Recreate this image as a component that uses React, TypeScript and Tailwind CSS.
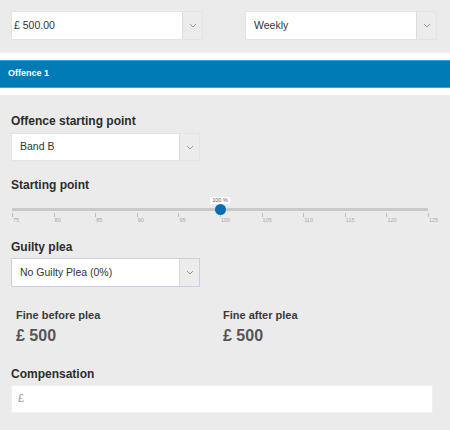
import React from "react";

const ticks = [75, 80, 85, 90, 95, 100, 105, 110, 115, 120, 125];

function Chevron() {
  return (
    <svg width="8" height="5" viewBox="0 0 8 5" fill="none" stroke="#9a9a9a" strokeWidth="1">
      <path d="M1 1l3 3 3-3" />
    </svg>
  );
}

function Select({ value, width, height = "h-[29px]", focused = false, pad = "pl-[8px]" }: { value: string; width: string; height?: string; focused?: boolean; pad?: string }) {
  return (
    <div
      className={`flex ${width} ${height} bg-white border ${focused ? "border-[#c9cde6]" : "border-[#e4e4e4]"}`}
    >
      <div className={`flex-1 flex items-center ${pad} text-[10.5px] text-[#333]`}>{value}</div>
      <div className="w-[20px] flex items-center justify-center bg-[#ececec] border-l border-[#dcdcdc]">
        <Chevron />
      </div>
    </div>
  );
}

function Slider() {
  return (
    <div className="relative ml-[12px] w-[416px] h-[26px] mt-[4px]">
      <div className="absolute left-0 right-0 top-[11px] h-[3px] bg-[#c9c9c9]" />
      {ticks.map((t, i) => (
        <div key={t} className="absolute top-[16px]" style={{ left: (i * 416) / 10 }}>
          <div className="w-px h-[4px] bg-[#bdbdbd]" />
          <div className="text-[5.5px] leading-[6px] text-[#aaa] ml-[1px]">{t}</div>
        </div>
      ))}
      <div className="absolute top-[0px] left-[208px] -translate-x-1/2 bg-white/80 px-[2px] text-[5.5px] leading-[7px] text-[#666]">
        100 %
      </div>
      <div className="absolute top-[7px] left-[203px] w-[11px] h-[11px] rounded-full bg-[#0a6db0]" />
    </div>
  );
}

export default function App() {
  return (
    <div className="w-[450px] h-[430px] overflow-hidden bg-[#ebebeb] text-[#333]" style={{ fontFamily: '"Liberation Sans", Arial, sans-serif' }}>
      <div className="flex justify-between pl-[11px] pr-[13px] pt-[11px]">
        <Select value="£ 500.00" width="w-[192px]" pad="pl-[2px]" />
        <Select value="Weekly" width="w-[192px]" />
      </div>
      <div className="mt-[13px] h-[7px] bg-white" />
      <div className="h-[28px] bg-[#007bb6] border-y border-[#36a5dc] flex items-center pl-[8px] text-white text-[9px] font-bold">
        Offence 1
      </div>
      <div className="h-[7px] bg-white" />

      <div className="px-[11px]">
        <div className="mt-[18px] text-[12px] leading-[16px] font-bold text-[#2d2d2d]">Offence starting point</div>
        <div className="mt-[4px]">
          <Select value="Band B" width="w-[189px]" height="h-[28px]" />
        </div>
        <div className="mt-[16px] text-[12px] leading-[16px] font-bold text-[#2d2d2d]">Starting point</div>
      </div>
      <Slider />
      <div className="px-[11px]">
        <div className="mt-[16px] text-[12px] leading-[16px] font-bold text-[#2d2d2d]">Guilty plea</div>
        <div className="mt-[3px]">
          <Select value="No Guilty Plea (0%)" width="w-[189px]" focused />
        </div>
        <div className="grid grid-cols-[207px_1fr] pl-[5px] mt-[21px]">
          <div>
            <div className="text-[11px] leading-[15px] font-bold text-[#3a3a3a]">Fine before plea</div>
            <div className="mt-[3px] text-[16px] leading-[20px] font-bold text-[#555]">£ 500</div>
          </div>
          <div>
            <div className="text-[11px] leading-[15px] font-bold text-[#3a3a3a]">Fine after plea</div>
            <div className="mt-[3px] text-[16px] leading-[20px] font-bold text-[#555]">£ 500</div>
          </div>
        </div>
        <div className="mt-[20px] text-[12px] leading-[16px] font-bold text-[#2d2d2d]">Compensation</div>
        <div className="mt-[3px] w-[422px] h-[28px] bg-white border border-[#f0f0f0] flex items-center pl-[6px] text-[10.5px] text-[#999]">
          £
        </div>
      </div>
    </div>
  );
}
